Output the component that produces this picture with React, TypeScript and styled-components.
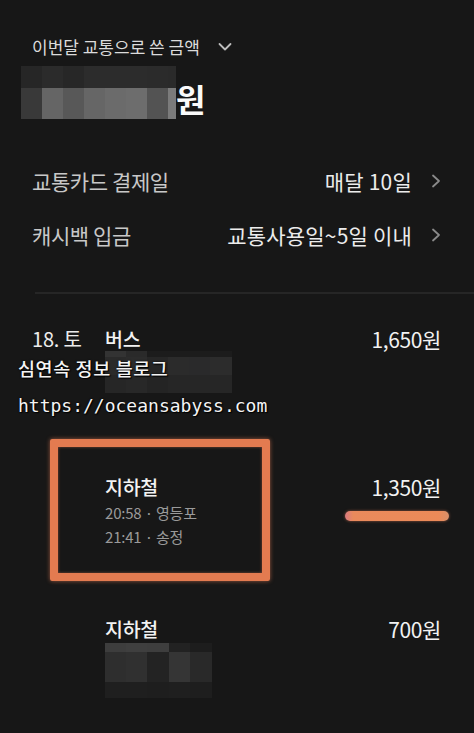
import React from "react";
import styled, { createGlobalStyle } from "styled-components";

const Global = createGlobalStyle`
  html, body { margin: 0; padding: 0; background: #171717; }
  body { font-family: "Noto Sans CJK KR", "Noto Sans", sans-serif; color: #e6e6e6; }
`;

const Page = styled.div`
  width: 474px;
  min-height: 733px;
  background: #171717;
  overflow: hidden;
  position: relative;
`;

const Header = styled.div`
  padding: 35px 0 0 32px;
`;

const TitleRow = styled.div`
  display: flex;
  align-items: center;
  gap: 18px;
  font-size: 17px;
  line-height: 24px;
  color: #dcdcdc;
  letter-spacing: 0;
`;

const AmountRow = styled.div`
  display: flex;
  align-items: flex-end;
  margin: 7px 0 0 -11px;
  height: 53px;
`;

const Mosaic = styled.div`
  display: grid;
  grid-template-columns: repeat(7, 21px) 8px;
  grid-template-rows: 22px 31px;
  width: 155px;
`;

const Cell = styled.div<{ $c: string }>`
  background: ${(p) => p.$c};
`;

const Won = styled.span`
  font-size: 32px;
  font-weight: 700;
  line-height: 40px;
  color: #fafafa;
  margin-bottom: 1px;
`;

const InfoList = styled.div`
  display: flex;
  flex-direction: column;
  gap: 26px;
  padding: 48px 32px 0 32px;
`;

const InfoRow = styled.div`
  display: flex;
  align-items: center;
  justify-content: space-between;
  height: 28px;
`;

const InfoLabel = styled.span`
  font-size: 21px;
  color: #c8c8c8;
  letter-spacing: -0.4px;
`;

const InfoValue = styled.span`
  display: flex;
  align-items: center;
  gap: 18px;
  font-size: 21px;
  color: #ececec;
  letter-spacing: 0.2px;
`;

const Divider = styled.div`
  margin: 43px 0 0 35px;
  height: 2px;
  background: #262626;
`;

const TxList = styled.div`
  display: flex;
  flex-direction: column;
  padding: 31px 33px 0 32px;
`;

const TxRow = styled.div<{ $h: number }>`
  position: relative;
  display: grid;
  grid-template-columns: 73px 1fr auto;
  height: ${(p) => p.$h}px;
`;

const Day = styled.span`
  font-size: 20px;
  color: #ececec;
  line-height: 28px;
  letter-spacing: -0.2px;
`;

const TxMain = styled.div`
  display: flex;
  flex-direction: column;
`;

const TxTitle = styled.span`
  font-size: 19.5px;
  font-weight: 500;
  line-height: 28px;
  color: #f2f2f2;
  letter-spacing: -0.3px;
`;

const TxSub = styled.span`
  font-size: 15px;
  line-height: 24px;
  color: #9a9a9a;
  letter-spacing: -0.2px;
`;

const Price = styled.span`
  font-size: 21px;
  line-height: 28px;
  color: #f2f2f2;
  letter-spacing: -0.4px;
`;

const SmallMosaic = styled.div<{ $cols: string; $rows: string; $top: number }>`
  display: grid;
  grid-template-columns: ${(p) => p.$cols};
  grid-template-rows: ${(p) => p.$rows};
  align-self: flex-start;
  margin-top: ${(p) => p.$top}px;
`;

const Watermark = styled.div`
  position: absolute;
  left: 18px;
  top: 355px;
  display: flex;
  flex-direction: column;
  gap: 12px;
  color: #f4f4f4;
  text-shadow: 0 0 2px #000, 1px 1px 1px #000;
`;

const WmTitle = styled.span`
  font-size: 18.5px;
  font-weight: 500;
  line-height: 26px;
  letter-spacing: 0.6px;
`;

const WmUrl = styled.span`
  font-family: "DejaVu Sans Mono", "Liberation Mono", monospace;
  font-size: 18px;
  line-height: 26px;
`;

const HighlightBox = styled.div`
  position: absolute;
  left: 18px;
  top: -34px;
  width: 204px;
  height: 126px;
  border: 8px solid #e37b50;
  border-radius: 2px;
  box-shadow: 0 0 4px rgba(240, 130, 90, 0.6), inset 0 0 3px rgba(240, 130, 90, 0.5);
`;

const Underline = styled.div`
  position: absolute;
  right: -8px;
  top: 38px;
  width: 104px;
  height: 10px;
  border-radius: 5px;
  background: linear-gradient(90deg, #d97a80 0%, #ea8a5c 8%, #ec8a58 90%, #d9906a 100%);
  box-shadow: 0 0 3px rgba(235, 130, 90, 0.6);
`;

const ChevronDown = () => (
  <svg width="14" height="10" viewBox="0 0 14 10" fill="none">
    <path d="M1.5 2 L7 7.5 L12.5 2" stroke="#bdbdbd" strokeWidth="1.8" strokeLinecap="round" strokeLinejoin="round" />
  </svg>
);

const ChevronRight = () => (
  <svg width="12" height="16" viewBox="0 0 12 16" fill="none">
    <path d="M3 2.5 L9 8 L3 13.5" stroke="#8a8a8a" strokeWidth="1.8" strokeLinecap="round" strokeLinejoin="round" />
  </svg>
);

const topRow = ["#262626", "#2b2b2b", "#272727", "#2c2c2c", "#2c2c2c", "#2c2c2c", "#2b2b2b", "#2a2a2a"];
const bottomRow = ["#393939", "#656565", "#585858", "#666666", "#6b6b6b", "#6d6d6d", "#535353", "#7b7b7b"];

const busCells = [
  "#333333", "#2a2a2a", "#1c1c1c", "#1c1c1c", "#1c1c1c", "#1c1c1c",
  "#2a2a2a", "#2c2c2c", "#262626", "#2b2b2b", "#2a2a2b", "#2c2c2c",
  "#262626", "#282828", "#242424", "#262626", "#262626", "#262626",
];

const subwayCells = [
  "#3d3d3d", "#3f3f3f", "#3e3e3e", "#222222", "#1d1d1d",
  "#2e2e2e", "#303030", "#232323", "#353535", "#292929",
  "#1f1f1f", "#1f1f1f", "#1e1e1e", "#1f1f1f", "#1e1e1e",
];

export default function App() {
  return (
    <Page>
      <Global />
      <Header>
        <TitleRow>
          이번달 교통으로 쓴 금액
          <ChevronDown />
        </TitleRow>
        <AmountRow>
          <Mosaic>
            {topRow.map((c, i) => (
              <Cell key={"t" + i} $c={c} />
            ))}
            {bottomRow.map((c, i) => (
              <Cell key={"b" + i} $c={c} />
            ))}
          </Mosaic>
          <Won>원</Won>
        </AmountRow>
      </Header>

      <InfoList>
        <InfoRow>
          <InfoLabel>교통카드 결제일</InfoLabel>
          <InfoValue>
            매달 10일
            <ChevronRight />
          </InfoValue>
        </InfoRow>
        <InfoRow>
          <InfoLabel>캐시백 입금</InfoLabel>
          <InfoValue>
            교통사용일~5일 이내
            <ChevronRight />
          </InfoValue>
        </InfoRow>
      </InfoList>

      <Divider />

      <TxList>
        <TxRow $h={148}>
          <Day>18. 토</Day>
          <TxMain>
            <TxTitle>버스</TxTitle>
            <SmallMosaic $cols="21px 21px 21px 21px 21px 22px" $rows="6px 18px 18px" $top={-2}>
              {busCells.map((c, i) => (
                <Cell key={i} $c={c} />
              ))}
            </SmallMosaic>
          </TxMain>
          <Price>1,650원</Price>
        </TxRow>
        <TxRow $h={142}>
          <span />
          <TxMain>
            <TxTitle>지하철</TxTitle>
            <TxSub>20:58 · 영등포</TxSub>
            <TxSub>21:41 · 송정</TxSub>
          </TxMain>
          <Price>1,350원</Price>
          <HighlightBox />
          <Underline />
        </TxRow>
        <TxRow $h={120}>
          <span />
          <TxMain>
            <TxTitle>지하철</TxTitle>
            <SmallMosaic $cols="21px 21px 22px 21px 22px" $rows="9px 30px 16px" $top={0}>
              {subwayCells.map((c, i) => (
                <Cell key={i} $c={c} />
              ))}
            </SmallMosaic>
          </TxMain>
          <Price>700원</Price>
        </TxRow>
      </TxList>

      <Watermark>
        <WmTitle>심연속 정보 블로그</WmTitle>
        <WmUrl>https://oceansabyss.com</WmUrl>
      </Watermark>
    </Page>
  );
}
